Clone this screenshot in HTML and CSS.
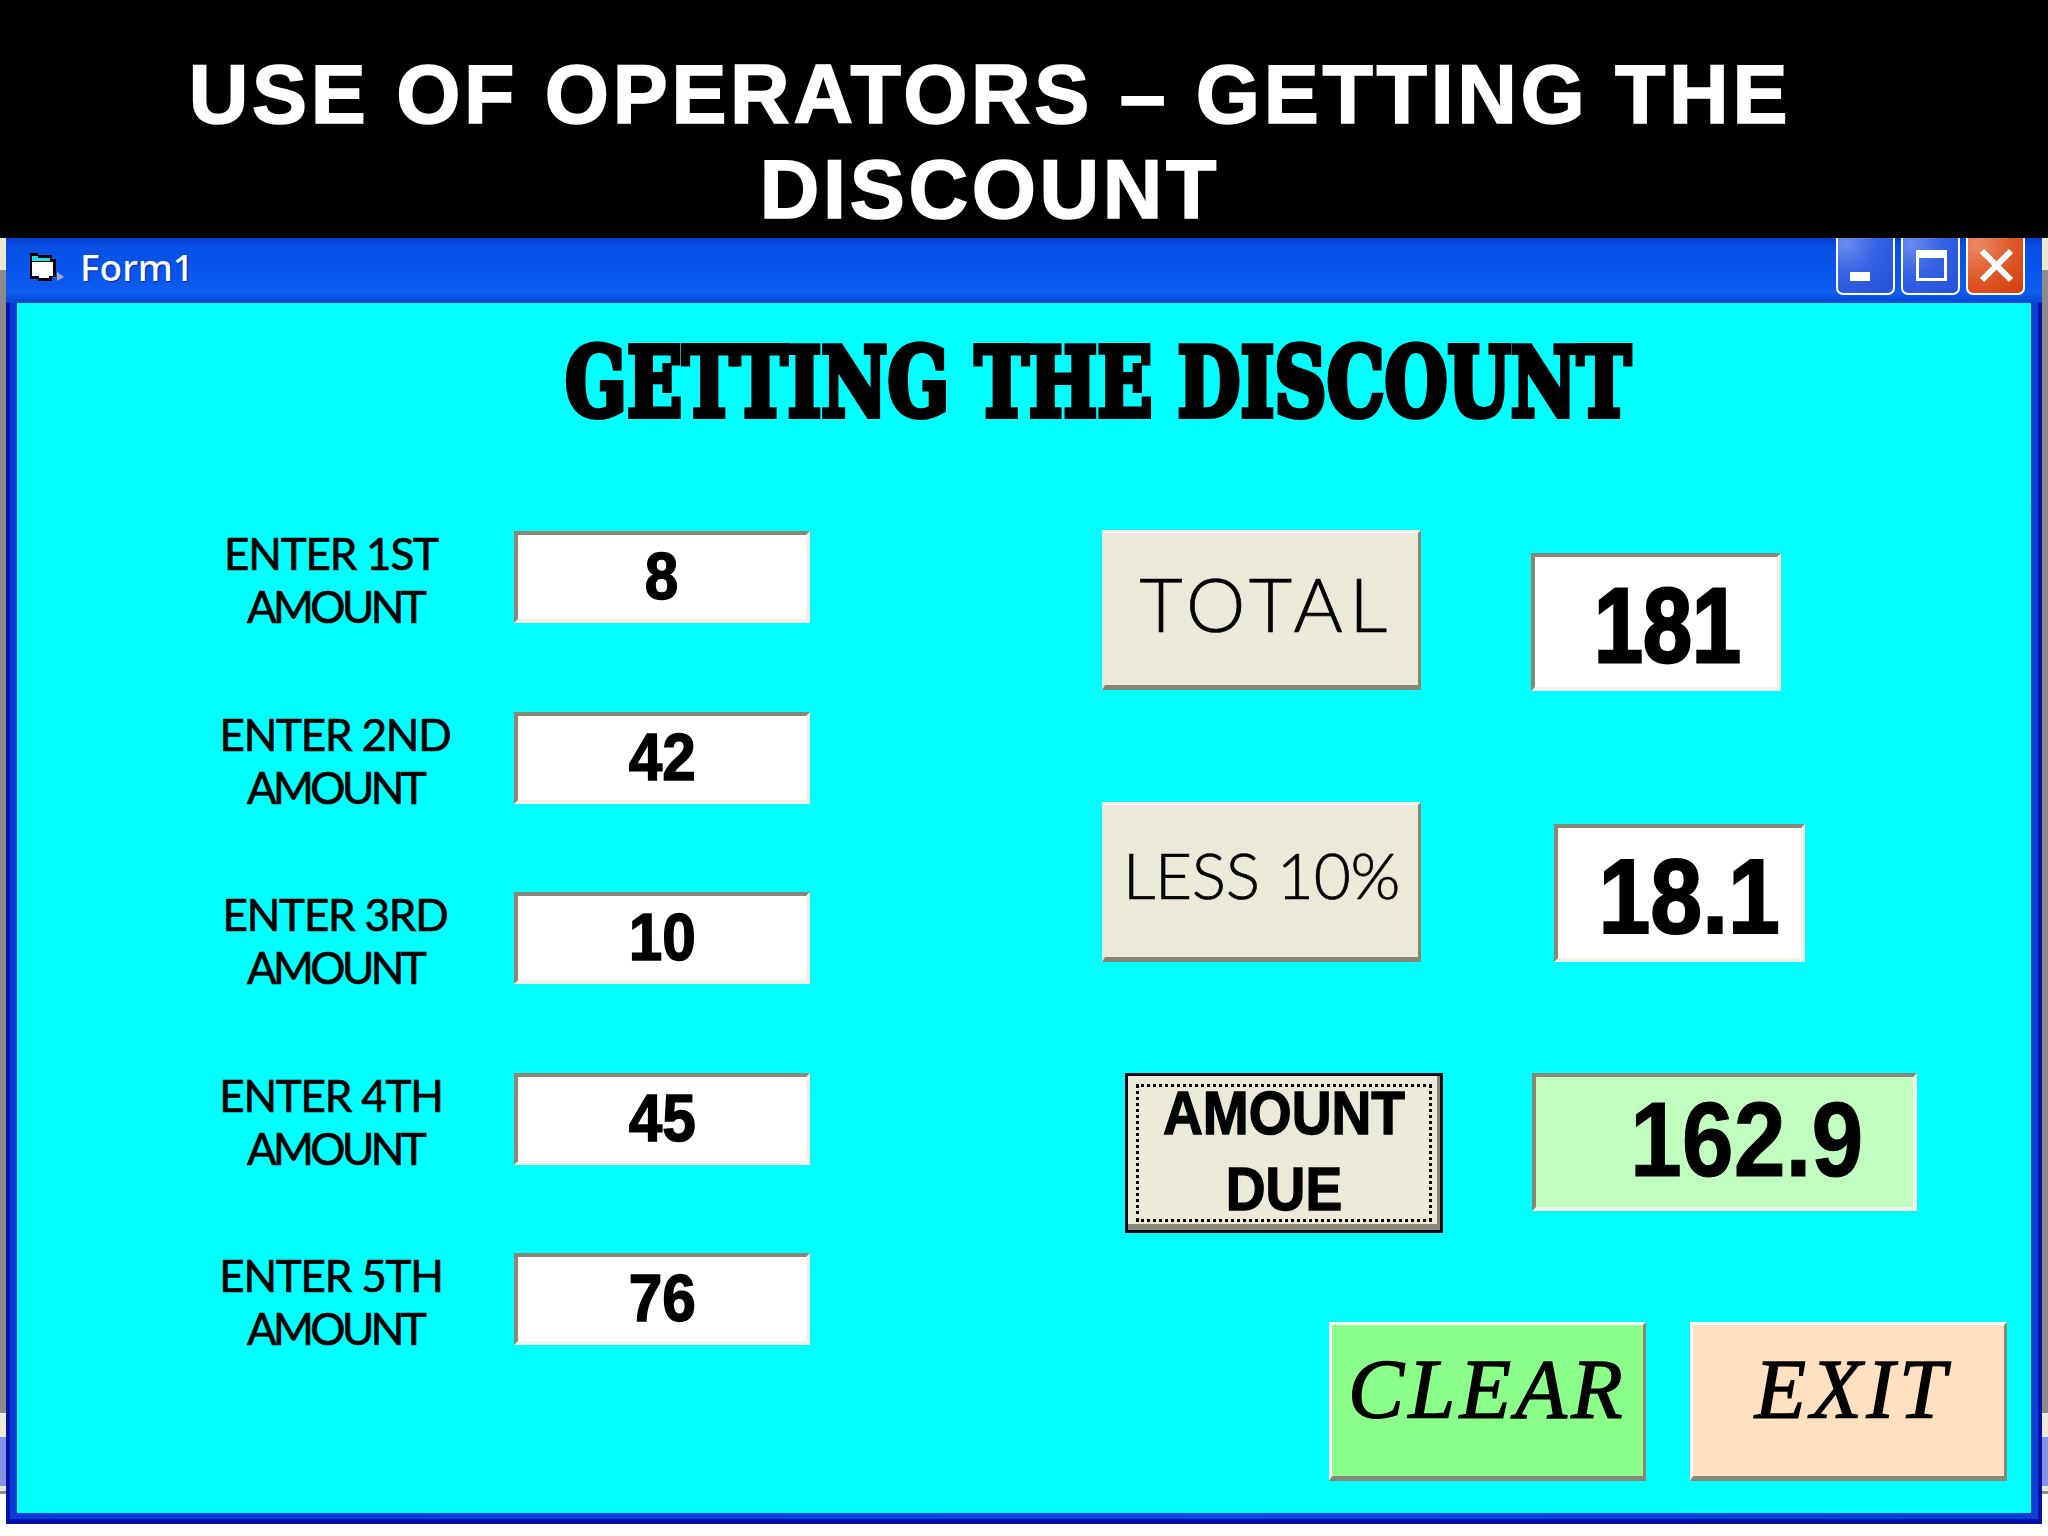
FILE: index.html
```html
<!DOCTYPE html>
<html lang="en">
<head>
<meta charset="utf-8">
<title>Use of operators – getting the discount</title>
<link rel="stylesheet" href="styles.css">
</head>
<body>
<header class="slide-head">
  <h1>USE OF OPERATORS – GETTING THE<br>DISCOUNT</h1>
</header>
<div class="stage">
  <div class="strip">
    <i class="seg seg-a"></i><i class="seg seg-b"></i><i class="seg seg-a2"></i><i class="seg seg-c"></i><i class="seg seg-d"></i><i class="seg seg-e"></i>
  </div>
  <section class="window">
    <div class="window-inner">
      <div class="titlebar">
        <svg class="app-icon" viewBox="0 0 36 32" width="36" height="32" aria-hidden="true">
          <path d="M1 2h8v2h14v4h4v18h-4v4h-14v-2h-8z" fill="#000"/>
          <path d="M3 5h6v2h12v3h-18z" fill="#1fe0e6"/>
          <path d="M3 11h21v14h-4v2h-10v-2h-7z" fill="#fff"/>
          <path d="M28 21l7 5-7 4z" fill="#a4a8b8"/>
        </svg>
        <span class="caption">Form1</span>
        <div class="controls">
          <span class="ctl ctl-blue">
            <svg viewBox="0 0 58 57" width="58" height="57" aria-hidden="true"><rect x="13" y="34" width="20" height="9" fill="#fff"/></svg>
          </span>
          <span class="ctl ctl-blue">
            <svg viewBox="0 0 58 57" width="58" height="57" aria-hidden="true"><path d="M14 12h31v31h-31z M17 20v20h25v-20z" fill="#fff" fill-rule="evenodd"/></svg>
          </span>
          <span class="ctl ctl-red">
            <svg viewBox="0 0 58 57" width="58" height="57" aria-hidden="true"><path d="M15 13l29 29M44 13l-29 29" stroke="#fff" stroke-width="6" fill="none"/></svg>
          </span>
        </div>
      </div>
      <main class="form">
        <h2 class="form-title"><span>GETTING THE DISCOUNT</span></h2>
        <div class="form-body">
          <div class="inputs">
            <div class="label lab-shift">ENTER 1ST<br><span class="amt">AMOUNT</span></div><div class="field"><span class="num">8</span></div>
            <div class="label">ENTER 2ND<br><span class="amt">AMOUNT</span></div><div class="field"><span class="num">42</span></div>
            <div class="label">ENTER 3RD<br><span class="amt">AMOUNT</span></div><div class="field"><span class="num">10</span></div>
            <div class="label lab-shift">ENTER 4TH<br><span class="amt">AMOUNT</span></div><div class="field"><span class="num">45</span></div>
            <div class="label lab-shift">ENTER 5TH<br><span class="amt">AMOUNT</span></div><div class="field"><span class="num">76</span></div>
          </div>
          <div class="actions">
            <div class="row row-total">
              <button class="btn btn-light btn-total" type="button">TOTAL</button>
              <output class="result result-total"><span class="num num-wide">181</span></output>
            </div>
            <div class="row row-less">
              <button class="btn btn-light btn-less" type="button">LESS 10%</button>
              <output class="result result-less"><span class="num num-mid">18.1</span></output>
            </div>
            <div class="row row-due">
              <button class="btn btn-due" type="button"><span class="focus"><span class="due-text">AMOUNT<br>DUE</span></span></button>
              <output class="result result-due"><span class="num num-mid">162.9</span></output>
            </div>
            <div class="row row-end">
              <button class="btn btn-script btn-clear" type="button">CLEAR</button>
              <button class="btn btn-script btn-exit" type="button">EXIT</button>
            </div>
          </div>
        </div>
      </main>
    </div>
  </section>
  <div class="strip">
    <i class="seg seg-a"></i><i class="seg seg-b"></i><i class="seg seg-a2"></i><i class="seg seg-c"></i><i class="seg seg-d"></i><i class="seg seg-e"></i>
  </div>
</div>
</body>
</html>
```
FILE: styles.css
```css
* { box-sizing: border-box; }
html, body { margin: 0; height: 1536px; overflow: hidden; background: #fff; }
body { width: 2048px; font-family: "Liberation Sans", Arial, sans-serif; color: #000; }

.slide-head { height: 238px; background: #000; padding: 47px 68px 0 0; text-align: center; }
.slide-head h1 { margin: 0; color: #fff; font-size: 82.5px; line-height: 95px; font-weight: 700; letter-spacing: 3.7px; white-space: nowrap; -webkit-text-stroke: 1.6px #fff; }

.stage { display: grid; grid-template-columns: 6px 2036px 6px; height: 1286px; }
.strip { display: flex; flex-direction: column; }
.seg { display: block; }
.seg-a { height: 32px; background: #ece9d8; }
.seg-b { height: 1143px; background: #8c8c8c; }
.seg-a2 { height: 24px; background: #ece9d8; }
.seg-c { height: 49px; background: #8493e2; }
.seg-d { height: 5px; background: #ece9d8; }
.seg-e { height: 3px; background: #8c8c8c; }

.window { background: #0510a8; padding: 0 4px 5px; }
.window-inner { background: linear-gradient(90deg, #0b3bd6, #0d4be4 60%, #0a3fd2); padding: 0 7px 6px; height: 100%; display: flex; flex-direction: column; }

.titlebar { margin: 0 -11px; height: 65px; display: flex; align-items: flex-start; padding: 13px 17px 0 23px;
  background: linear-gradient(180deg, #0740cf 0%, #0850e4 14%, #0856ec 55%, #0c5eef 84%, #0845d2 100%); }
.app-icon { flex: none; }
.caption { margin: -8px 0 0 15px; font: 500 37px/48px "Noto Sans", "Liberation Sans", sans-serif; color: #fff; text-shadow: 1px 1px 1px #0a2a9e; }
.controls { margin: -13px 0 0 auto; display: flex; gap: 6px; }
.ctl { display: block; width: 59px; height: 57px; border: 2px solid #fff; border-top: 0; border-radius: 0 0 7px 7px; overflow: hidden; }
.ctl svg { display: block; margin: 0 -1px; }
.ctl-blue { background: radial-gradient(circle at 15% 10%, #6a8cf0 0%, #3462e2 45%, #2450d8 100%); }
.ctl-red { background: radial-gradient(circle at 15% 10%, #ec8a66 0%, #de5a2c 50%, #d23c08 100%); }

.form { flex: 1; background: #0ff; padding-top: 43px; }
.form-title { margin: 0 0 111px 548px; height: 73px; width: 1068px; font: 700 96px/73px "DejaVu Serif", "Liberation Serif", serif; }
.form-title span { display: block; white-space: nowrap; transform: scaleX(0.755); transform-origin: 0 50%; -webkit-text-stroke: 6px #000; }

.form-body { display: flex; align-items: flex-start; padding-left: 183px; }

.inputs { display: grid; grid-template-columns: 270px 296px; column-gap: 44px; grid-auto-rows: 92px; row-gap: 88.6px; padding-top: 1px; }
.label { font: 400 44px/53px Lato, "Liberation Sans", sans-serif; letter-spacing: -1.2px; text-align: center; margin-top: -4px; white-space: nowrap; -webkit-text-stroke: 0.7px #000; }
.lab-shift { text-indent: -8px; }
.amt { letter-spacing: -3.6px; }
.field { background: #fff; border: 4px solid; border-color: #8a8678 #f4f1e6 #f4f1e6 #8a8678; display: flex; align-items: center; justify-content: center; padding-bottom: 3px; font: 700 67px/1 "Liberation Sans", sans-serif; -webkit-text-stroke: 1.5px #000; }
.num { display: block; transform: scaleX(0.9); }
.num-wide { transform: scaleX(0.83); -webkit-text-stroke: 3px #000; }
.num-mid { transform: scaleX(0.88); }

.actions { margin-left: 292px; display: flex; flex-direction: column; }
.row { display: flex; height: 160px; }
.row-less { margin-top: 112px; }
.row-due { margin-top: 111px; padding-left: 23px; }
.row-end { margin-top: 89px; height: 159px; padding-left: 227px; gap: 44px; }

.btn { width: 319px; height: 100%; padding: 0; color: #000; display: flex; align-items: center; justify-content: center; background: #ece9d8; border: 3px solid; border-color: #fbfaf4 #8a8678 #8a8678 #ece9d8; border-bottom-width: 5px; border-radius: 0; }
.btn-light { font-family: Lato, "Liberation Sans", sans-serif; font-weight: 300; -webkit-text-stroke: 0.7px #000; }
.btn-total { font-size: 75px; line-height: 1; padding: 0 0 11px 10px; letter-spacing: 6.5px; }
.btn-less { font-size: 64px; line-height: 1; padding-bottom: 12px; letter-spacing: -0.3px; }

.btn-due { width: 318px; border: 3px solid #0a0a14; background: #ece9d8; padding: 8px; box-shadow: inset -3px -6px 0 #8a8678; }
.focus { display: block; width: 100%; height: 100%; border: 3px dotted #000; text-align: center; overflow: visible; }
.due-text { display: block; margin-top: -12px; font: 700 62px/76px "Liberation Sans", sans-serif; transform: scaleX(0.89); -webkit-text-stroke: 1.4px #000; }

.btn-script { width: 317px; font: italic 400 84px/1 "Liberation Serif", serif; letter-spacing: 4.5px; border-left-color: #fff; border-top-color: #fff; padding-bottom: 22px; -webkit-text-stroke: 1.4px #000; }
.btn-clear { background: #8aff8a; }
.btn-exit { background: #ffe0c0; padding-left: 8px; }

.result { background: #fff; height: 138px; display: flex; align-items: center; justify-content: center; border: 4px solid; border-color: #8a8678 #f4f1e6 #f4f1e6 #8a8678; font: 700 106px/1 "Liberation Sans", sans-serif; -webkit-text-stroke: 2px #000; }
.result-total { width: 250px; margin: 23px 0 0 110px; padding: 6px 0 0 22px; }
.result-less { width: 251px; margin: 22px 0 0 133px; padding: 6px 0 0 20px; }
.result-due { width: 385px; margin: 0 0 0 89px; background: #c0ffc0; padding: 0 0 6px 44px; -webkit-text-stroke: 1px #000; }
```
